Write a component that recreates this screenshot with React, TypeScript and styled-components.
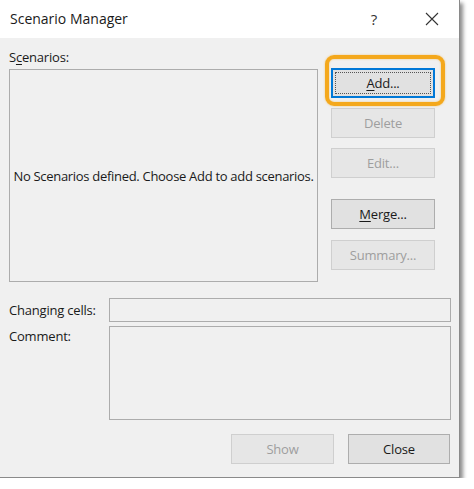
import React from 'react';
import styled, { createGlobalStyle } from 'styled-components';

const GlobalStyle = createGlobalStyle`
  html, body {
    margin: 0;
    padding: 0;
    background: #ffffff;
  }
  body {
    font-family: "Segoe UI", "Open Sans", "Noto Sans", sans-serif;
  }
`;

const Dialog = styled.div`
  width: 459px;
  height: 477px;
  background: #f0f0f0;
  border-right: 1px solid #8a8a8a;
  border-bottom: 1px solid #8a8a8a;
  box-shadow: 3px 3px 4px rgba(0, 0, 0, 0.45);
  display: flex;
  flex-direction: column;
  color: #1a1a1a;
`;

const TitleBar = styled.div`
  height: 38px;
  background: #ffffff;
  display: flex;
  align-items: center;
  padding-left: 10px;
  flex-shrink: 0;
`;

const Title = styled.div`
  flex: 1;
  font-size: 14px;
  color: #1a1a1a;
  margin-top: -1px;
`;

const TitleIcon = styled.div<{ $gap?: number }>`
  width: 46px;
  height: 38px;
  margin-right: ${p => p.$gap ?? 0}px;
  display: flex;
  align-items: center;
  justify-content: center;
  font-size: 15px;
  color: #333;
`;

const Body = styled.div`
  flex: 1;
  display: flex;
  flex-direction: column;
  padding: 9px 8px 13px 9px;
  font-size: 13px;
  letter-spacing: -0.2px;
`;

const TopRow = styled.div`
  display: flex;
  gap: 13px;
`;

const ListColumn = styled.div`
  display: flex;
  flex-direction: column;
`;

const Label = styled.div`
  line-height: 20px;
  height: 20px;
  margin-bottom: 2px;
`;

const ListBox = styled.div`
  width: 307px;
  height: 211px;
  border: 1px solid #acacac;
  background: #f0f0f0;
  display: flex;
  align-items: center;
  justify-content: center;
  white-space: nowrap;
  letter-spacing: -0.3px;
`;

const ButtonColumn = styled.div`
  display: flex;
  flex-direction: column;
  padding-top: 21px;
`;

const Button = styled.div<{ $disabled?: boolean; $width?: number; $gap?: number }>`
  box-sizing: border-box;
  width: ${p => p.$width ?? 104}px;
  height: 30px;
  margin-bottom: ${p => p.$gap ?? 0}px;
  display: flex;
  align-items: center;
  justify-content: center;
  background: ${p => (p.$disabled ? '#e6e6e6' : '#e1e1e1')};
  border: 1px solid ${p => (p.$disabled ? '#cfcfcf' : '#adadad')};
  color: ${p => (p.$disabled ? '#9e9e9e' : '#1a1a1a')};
`;

const FocusWrap = styled.div`
  position: relative;
  margin-bottom: 10px;
`;

const FocusButton = styled(Button)`
  border: 2px solid #0078d7;
  position: relative;
  &::after {
    content: '';
    position: absolute;
    inset: 2px;
    border: 1px dotted #555;
  }
`;

const Highlight = styled.div`
  position: absolute;
  left: -6px;
  top: -13px;
  right: -10px;
  bottom: -8px;
  border: 4px solid #f4a81c;
  border-radius: 9px;
  box-shadow: 0 0 2px rgba(244, 168, 28, 0.6), inset 0 0 2px rgba(244, 168, 28, 0.6);
  pointer-events: none;
`;

const FieldGrid = styled.div`
  display: grid;
  grid-template-columns: 100px 342px;
  row-gap: 4px;
  margin-top: 16px;
`;

const FieldLabel = styled.div<{ $center?: boolean }>`
  line-height: ${p => (p.$center ? '24px' : '20px')};
`;

const TextField = styled.div<{ $height: number }>`
  height: ${p => p.$height}px;
  border: 1px solid #acacac;
  background: #f0f0f0;
`;

const Footer = styled.div`
  display: flex;
  justify-content: flex-end;
  gap: 14px;
  margin-top: auto;
  padding-right: 1px;
`;

const Mn = styled.span`
  text-decoration: underline;
  text-underline-offset: 2px;
`;

export default function App() {
  return (
    <>
      <GlobalStyle />
      <Dialog>
        <TitleBar>
          <Title>Scenario Manager</Title>
          <TitleIcon $gap={12}>?</TitleIcon>
          <TitleIcon $gap={4}>
            <svg width="14" height="14" viewBox="0 0 14 14">
              <path d="M1 1 L13 13 M13 1 L1 13" stroke="#333" strokeWidth="1.1" fill="none" />
            </svg>
          </TitleIcon>
        </TitleBar>
        <Body>
          <TopRow>
            <ListColumn>
              <Label>
                S<Mn>c</Mn>enarios:
              </Label>
              <ListBox>No Scenarios defined. Choose Add to add scenarios.</ListBox>
            </ListColumn>
            <ButtonColumn>
              <FocusWrap>
                <FocusButton>
                  <Mn>A</Mn>dd...
                </FocusButton>
                <Highlight />
              </FocusWrap>
              <Button $disabled $gap={10}>Delete</Button>
              <Button $disabled $gap={21}>Edit...</Button>
              <Button $gap={11}>
                <Mn>M</Mn>erge...
              </Button>
              <Button $disabled>Summary...</Button>
            </ButtonColumn>
          </TopRow>
          <FieldGrid>
            <FieldLabel $center>Changing cells:</FieldLabel>
            <TextField $height={22} />
            <FieldLabel>Comment:</FieldLabel>
            <TextField $height={92} />
          </FieldGrid>
          <Footer>
            <Button $disabled $width={103}>Show</Button>
            <Button $width={102}>Close</Button>
          </Footer>
        </Body>
      </Dialog>
    </>
  );
}
